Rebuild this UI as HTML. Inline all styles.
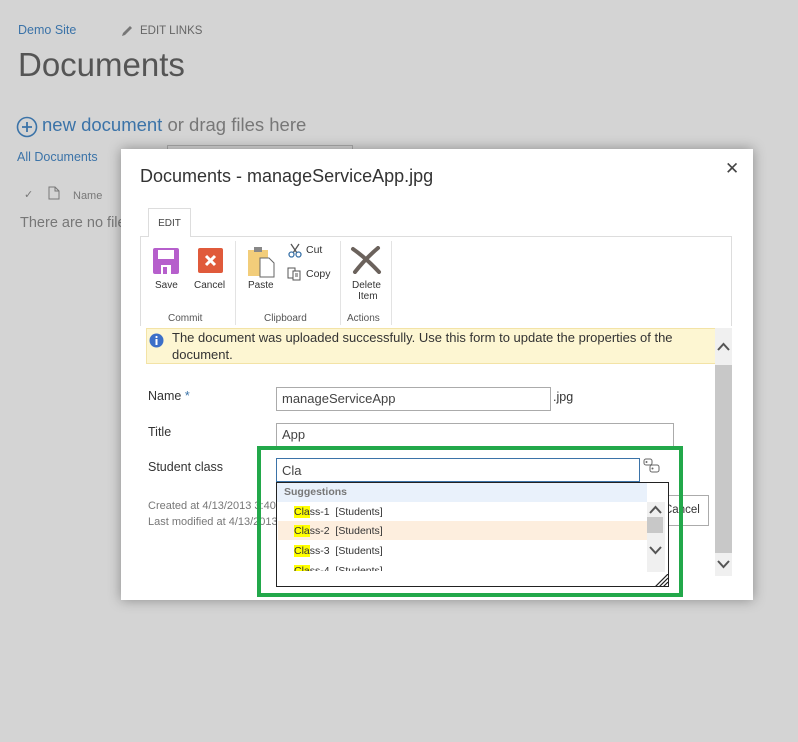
<!DOCTYPE html>
<html><head><meta charset="utf-8"><style>
*{margin:0;padding:0;box-sizing:border-box}
body{width:798px;height:742px;background:#d4d4d4;font-family:"Liberation Sans",sans-serif;position:relative;overflow:hidden;color:#444}
.a{position:absolute;white-space:nowrap}
.dlg{position:absolute;left:121px;top:149px;width:632px;height:451px;background:#fff;box-shadow:0 0 12px rgba(0,0,0,.35)}
.btnl{font-size:10px;color:#333;text-align:center}
.inp{position:absolute;border:1px solid #ababab;background:#fff;font-size:13px;color:#444;padding:3px 5px;height:24px}
.hl{background:#ffff00}
.row{position:absolute;left:1px;width:369px;height:19px;font-size:10.5px;color:#333;padding:4px 0 0 16px}
</style></head><body>
<div class="a" style="left:18px;top:23px;font-size:12.5px;color:#3b73a8">Demo Site</div>
<svg class="a" style="left:121px;top:25px" width="12" height="12" viewBox="0 0 12 12"><path d="M1 11 L2 8 L9 1 L11 3 L4 10 Z" fill="#777"/></svg>
<div class="a" style="left:140px;top:25px;font-size:11.5px;color:#666">EDIT LINKS</div>
<div class="a" style="left:18px;top:46px;font-size:33px;color:#555">Documents</div>
<svg class="a" style="left:16px;top:116px" width="22" height="22" viewBox="0 0 22 22"><circle cx="11" cy="11" r="9.5" fill="none" stroke="#3b73a8" stroke-width="1.6"/><path d="M11 6V16M6 11H16" stroke="#3b73a8" stroke-width="1.8"/></svg>
<div class="a" style="left:42px;top:114px;font-size:18.5px;color:#3b73a8">new document <span style="color:#777">or drag files here</span></div>
<div class="a" style="left:17px;top:150px;font-size:12.5px;color:#3b73a8">All Documents</div>
<div class="a" style="left:167px;top:145px;width:186px;height:6px;border:1px solid #aaa;border-bottom:none"></div>
<div class="a" style="left:24px;top:188px;font-size:11px;color:#777">✓</div>
<svg class="a" style="left:48px;top:186px" width="12" height="14" viewBox="0 0 12 14"><path d="M1 1H7L11 5V13H1Z M7 1V5H11" fill="none" stroke="#777"/></svg>
<div class="a" style="left:73px;top:190px;font-size:11px;color:#777">Name</div>
<div class="a" style="left:20px;top:215px;font-size:14.5px;color:#777">There are no files</div>

<div class="dlg">
<div class="a" style="left:19px;top:17px;font-size:18px;color:#333">Documents - manageServiceApp.jpg</div>
<div class="a" style="left:604px;top:10px;font-size:17px;color:#444">✕</div>
<div class="a" style="left:27px;top:59px;width:43px;height:29px;border:1px solid #ddd;border-bottom:none;background:#fff;font-size:10px;color:#444;text-align:center;padding-top:9px;z-index:2">EDIT</div>
<div class="a" style="left:19px;top:87px;width:592px;height:90px;border-top:1px solid #ddd;border-left:1px solid #ddd;border-right:1px solid #ddd"></div>
<div class="a" style="left:114px;top:92px;width:1px;height:84px;background:#e3e3e3"></div>
<div class="a" style="left:219px;top:92px;width:1px;height:84px;background:#e3e3e3"></div>
<div class="a" style="left:270px;top:92px;width:1px;height:84px;background:#e3e3e3"></div>
<svg class="a" style="left:32px;top:99px" width="26" height="26" viewBox="0 0 26 26"><rect x="0" y="0" width="26" height="26" rx="2" fill="#b65fcc"/><rect x="5" y="2" width="16" height="9" fill="#fff"/><rect x="8" y="17" width="10" height="9" fill="#fff"/><rect x="10" y="19" width="4" height="7" fill="#b65fcc"/></svg>
<svg class="a" style="left:77px;top:99px" width="25" height="25" viewBox="0 0 25 25"><rect width="25" height="25" rx="2" fill="#e05a3b"/><path d="M8 8L17 17M17 8L8 17" stroke="#fff" stroke-width="3"/></svg>
<div class="a btnl" style="left:34px;top:131px">Save</div>
<div class="a btnl" style="left:73px;top:131px">Cancel</div>
<svg class="a" style="left:126px;top:97px" width="30" height="32" viewBox="0 0 30 32"><rect x="1" y="4" width="20" height="26" fill="#f2cd7a"/><rect x="7" y="1" width="8" height="5" fill="#888"/><path d="M13 12H22L27 17V31H13Z" fill="#fff" stroke="#666"/></svg>
<div class="a btnl" style="left:127px;top:131px">Paste</div>
<svg class="a" style="left:166px;top:94px" width="16" height="15" viewBox="0 0 16 15"><path d="M4 1L10 10M12 1L6 10" stroke="#555" stroke-width="1.3"/><circle cx="4.5" cy="11.5" r="2.5" fill="none" stroke="#3b73a8" stroke-width="1.3"/><circle cx="11.5" cy="11.5" r="2.5" fill="none" stroke="#3b73a8" stroke-width="1.3"/></svg>
<div class="a btnl" style="left:185px;top:95px;font-size:10.5px">Cut</div>
<svg class="a" style="left:166px;top:118px" width="15" height="14" viewBox="0 0 15 14"><rect x="1" y="1" width="7" height="10" fill="#fff" stroke="#555"/><rect x="6" y="4" width="7" height="9" fill="#fff" stroke="#555"/><path d="M8 7H11M8 9H11" stroke="#555"/></svg>
<div class="a btnl" style="left:185px;top:119px;font-size:10.5px">Copy</div>
<svg class="a" style="left:229px;top:97px" width="32" height="28" viewBox="0 0 32 28"><path d="M3 3Q16 12 29 26M28 2Q16 12 5 26" stroke="#6b625c" stroke-width="4" fill="none" stroke-linecap="round"/></svg>
<div class="a btnl" style="left:231px;top:131px;line-height:11px">Delete<br>&nbsp;Item</div>
<div class="a btnl" style="left:47px;top:164px;color:#555">Commit</div>
<div class="a btnl" style="left:143px;top:164px;color:#555">Clipboard</div>
<div class="a btnl" style="left:226px;top:164px;color:#555">Actions</div>
<div class="a" style="left:25px;top:179px;width:570px;height:36px;background:#fdf6d2;border:1px solid #f3e3a6"></div>
<svg class="a" style="left:28px;top:184px" width="15" height="15" viewBox="0 0 15 15"><circle cx="7.5" cy="7.5" r="7" fill="#3c6fc8"/><rect x="6.5" y="6" width="2" height="6" fill="#fff"/><circle cx="7.5" cy="4" r="1.1" fill="#fff"/></svg>
<div class="a" style="left:51px;top:180px;font-size:13px;color:#333;line-height:17px">The document was uploaded successfully. Use this form to update the properties of the<br>document.</div>
<div class="a" style="left:594px;top:179px;width:17px;height:248px;background:#f0f0f0"></div>
<div class="a" style="left:594px;top:216px;width:17px;height:188px;background:#c8c8c8"></div>
<svg class="a" style="left:596px;top:193px" width="13" height="9" viewBox="0 0 13 9"><path d="M1 8L6.5 2L12 8" stroke="#555" stroke-width="2" fill="none"/></svg>
<svg class="a" style="left:596px;top:411px" width="13" height="9" viewBox="0 0 13 9"><path d="M1 1L6.5 7L12 1" stroke="#555" stroke-width="2" fill="none"/></svg>
<div class="a" style="left:27px;top:240px;font-size:12.5px;color:#333">Name <span style="color:#3b73a8">*</span></div>
<div class="inp" style="left:155px;top:238px;width:275px">manageServiceApp</div>
<div class="a" style="left:432px;top:241px;font-size:12.5px;color:#333">.jpg</div>
<div class="a" style="left:27px;top:276px;font-size:12.5px;color:#333">Title</div>
<div class="inp" style="left:155px;top:274px;width:398px">App</div>
<div class="a" style="left:27px;top:311px;font-size:12.5px;color:#333">Student class</div>
<div class="a" style="left:27px;top:349px;font-size:11px;color:#777;line-height:16px">Created at 4/13/2013 3:40<br>Last modified at 4/13/2013</div>
<div class="a" style="left:530px;top:346px;width:58px;height:31px;border:1px solid #ababab;background:#fff;font-size:11.5px;color:#333;padding:8px 0 0 12px">Cancel</div>
<div class="a" style="left:136px;top:297px;width:426px;height:151px;border:4px solid #22a84a"></div>
<div class="inp" style="left:155px;top:309px;width:364px;border-color:#3b73a8;padding-top:4px">Cla</div>
<svg class="a" style="left:522px;top:309px" width="18" height="16" viewBox="0 0 18 16"><rect x="1" y="1" width="8" height="6" rx="2" fill="none" stroke="#666"/><rect x="7" y="7" width="9" height="7" rx="2" fill="#fff" stroke="#666"/><circle cx="3.5" cy="4" r="1" fill="#666"/><circle cx="9.5" cy="10.5" r="1" fill="#666"/></svg>
<div class="a" style="left:155px;top:333px;width:393px;height:105px;border:1px solid #222;background:#fff;overflow:hidden">
 <div class="a" style="left:0;top:0;width:370px;height:19px;background:#e9f1fb;font-size:10.5px;font-weight:bold;color:#777;padding:3px 0 0 7px">Suggestions</div>
 <div class="row" style="top:19px"><span class="hl">Cla</span>ss-1&nbsp; [Students]</div>
 <div class="row" style="top:38px;background:#fdeede"><span class="hl">Cla</span>ss-2&nbsp; [Students]</div>
 <div class="row" style="top:58px"><span class="hl">Cla</span>ss-3&nbsp; [Students]</div>
 <div class="row" style="top:78px"><span class="hl">Cla</span>ss-4&nbsp; [Students]</div>
 <div class="a" style="left:0;top:88px;width:370px;height:20px;background:#fff"></div>
 <div class="a" style="left:370px;top:19px;width:18px;height:70px;background:#f0f0f0"></div>
 <div class="a" style="left:370px;top:34px;width:16px;height:16px;background:#c8c8c8"></div>
 <svg class="a" style="left:372px;top:22px" width="13" height="9" viewBox="0 0 13 9"><path d="M1 8L6.5 2L12 8" stroke="#555" stroke-width="2" fill="none"/></svg>
 <svg class="a" style="left:372px;top:63px" width="13" height="9" viewBox="0 0 13 9"><path d="M1 1L6.5 7L12 1" stroke="#555" stroke-width="2" fill="none"/></svg>
 <svg class="a" style="left:377px;top:91px" width="14" height="13" viewBox="0 0 14 13"><path d="M1 13L14 0M5 13L14 4M9 13L14 8" stroke="#222" stroke-width="1.2"/></svg>
</div>
</div>
</body></html>
